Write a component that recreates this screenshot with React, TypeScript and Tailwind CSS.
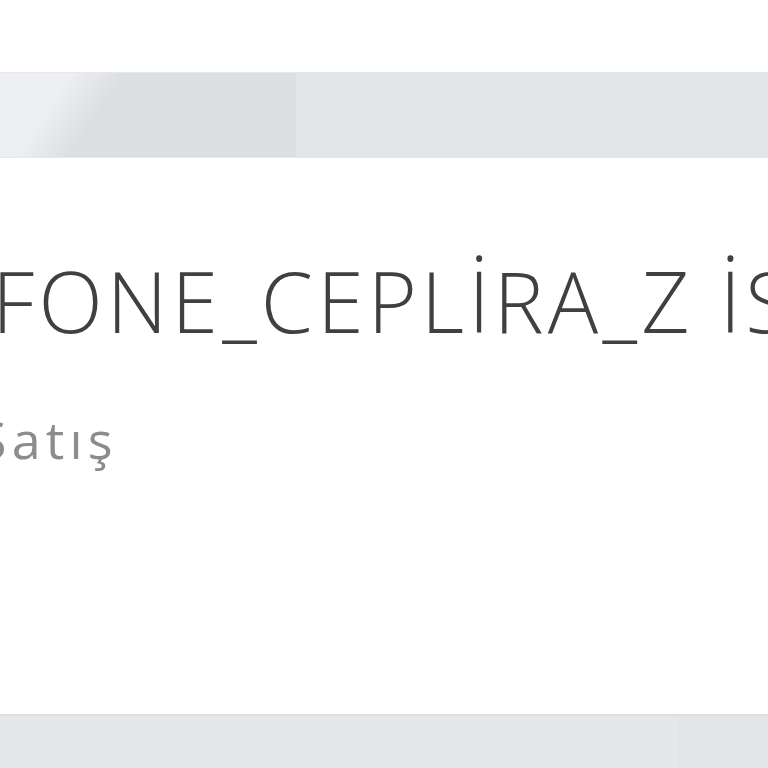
export default function App() {
  return (
    <div className="h-[768px] w-[768px] overflow-hidden bg-white flex flex-col" style={{ fontFamily: '"Open Sans", "Noto Sans", sans-serif' }}>
      <div className="h-[72px] shrink-0" />
      <div className="h-[86px] shrink-0 flex border-y border-[#e6e8eb]">
        <div className="w-[296px] bg-[linear-gradient(124deg,#edeff2_20%,#dcdfe2_36%)]" />
        <div className="flex-1 bg-[#e3e6e9]" />
      </div>
      <div className="flex-1 flex flex-col pt-[101px]">
        <div className="-ml-[8px] whitespace-nowrap text-[84px] leading-[1] font-light text-[#3f4042] tracking-[0.05em]">
          FONE_CEPLİRA_Z İSTANBUL
        </div>
        <div className="mt-[70px] -ml-[22px] whitespace-nowrap text-[52px] leading-[1] text-[#8c8c8c] tracking-[0.1em]">
          Satış
        </div>
      </div>
      <div className="h-[54px] shrink-0 flex border-t-2 border-[#dcdfe0]">
        <div className="flex-1 bg-[#e4e8eb]" />
        <div className="w-[90px] bg-[#e1e5e8]" />
      </div>
    </div>
  );
}
